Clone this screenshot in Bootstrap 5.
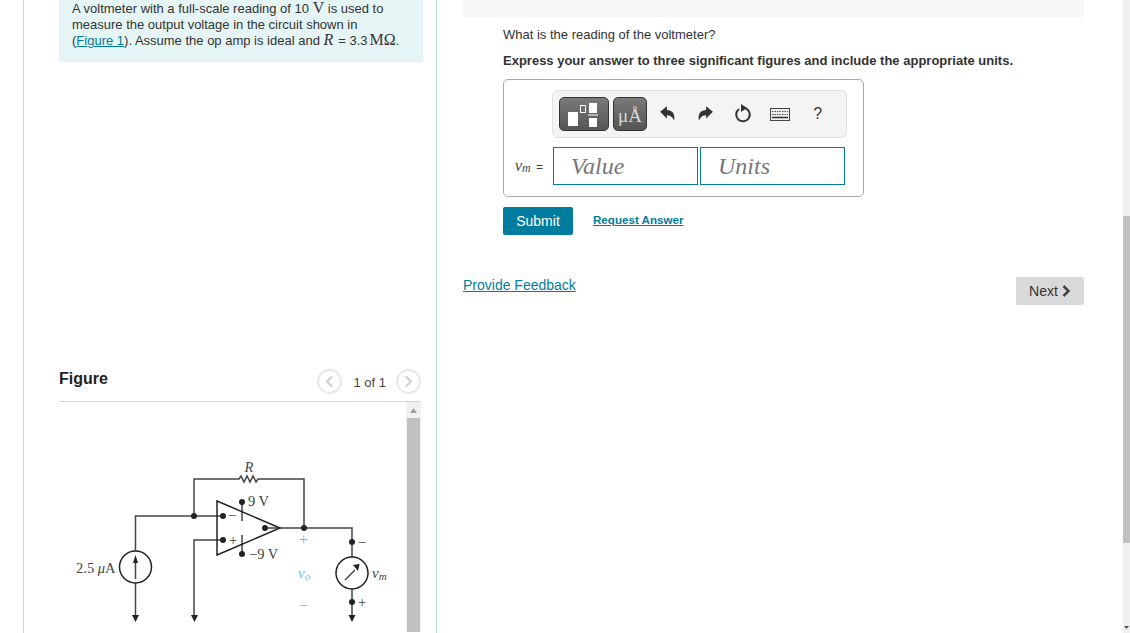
<!DOCTYPE html>
<html lang="en">
  <head>
    <meta charset="UTF-8">
    <meta name="viewport" content="width=device-width, initial-scale=1.0">
    <title>Voltmeter problem</title>
    <link href="https://cdn.jsdelivr.net/npm/bootstrap@5.3.0/dist/css/bootstrap.min.css" rel="stylesheet">
    <style>
      html, body { height: 633px; overflow: hidden; }
      body {
        background: #fff;
        color: #333;
        font-family: "Liberation Sans", Arial, sans-serif;
        font-size: 13px;
        line-height: 16px;
      }
      a { color: #007c9e; }
      .math { font-family: "Liberation Serif", "Times New Roman", serif; font-size: 16px; line-height: 0; }
      .math-i { font-style: italic; margin-right: 5px; }
      .math-u { margin-left: 2px; }
      .page-wrap { height: 633px; }
      .left-pane {
        width: 414px;
        margin-left: 23px;
        padding: 0 13px 0 35px;
        border-left: 1px solid #d4d4d4;
        border-right: 1px solid #b9d3e6;
        height: 633px;
      }
      .intro-box {
        width: 364px;
        height: 62px;
        margin-bottom: 0;
        padding: 1px 22px 0 13px;
        background: #e5f5f6;
      }
      .fig-head {
        height: 340px;
        padding-bottom: 7px;
        width: 362px;
        border-bottom: 1px solid #d5d5d5;
      }
      .fig-title { font-size: 16px; font-weight: 700; color: #222; line-height: 18px; margin-bottom: 6px; }
      .fig-count { font-size: 13px; color: #444; margin: 2px 10px 0 11px; }
      .pager-btn {
        width: 25px;
        height: 25px;
        padding: 0;
        border: 2px solid #e8e8e8;
        border-radius: 50%;
        background: #fff;
      }
      .fig-scroll { width: 362px; height: 230px; }
      .circuit { width: 347px; height: 230px; flex: none; }
      .inner-bar { width: 15px; background: #f1f1f1; }
      .inner-arrow { height: 16px; }
      .inner-thumb { flex: 1; margin: 0 1px; background: #c1c1c1; }
      .right-pane { width: 621px; margin-left: 26px; height: 633px; }
      .top-strip { height: 17px; background: #f7f7f7; }
      .question { padding-left: 40px; }
      .q-text { margin: 10px 0 10px; }
      .q-strong { font-weight: 700; margin-bottom: 10px; }
      .answer-box {
        width: 361px;
        height: 118px;
        padding: 10px 18px 0 11px;
        border: 1px solid #aaa;
        border-radius: 5px;
      }
      .tool-bar {
        width: 295px;
        height: 48px;
        margin-left: 37px;
        padding: 6px;
        background: #f4f4f4;
        border: 1px solid #e0e0e0;
        border-radius: 6px;
      }
      .tool-btn {
        height: 34px;
        padding: 0;
        margin-right: 2px;
        border: 1px solid #333;
        border-radius: 5px;
        background: linear-gradient(#7a7a7a, #555);
      }
      .tool-btn-a { width: 50px; margin-right: 4px; }
      .tool-btn-b { width: 34px; padding-top: 3px; color: #d8d8d8; font-family: "Liberation Serif", serif; font-size: 19px; line-height: 1; }
      .tool-icon { width: 37.5px; text-align: center; color: #333; }
      .tool-help { font-size: 16px; }
      .input-row { margin-top: 9px; }
      .var-label { width: 38px; font-size: 12px; padding-left: 0; color: #444; white-space: nowrap; }
      .var-label i { font-family: "Liberation Serif", serif; font-size: 16px; margin-right: 2px; }
      .var-label sub { font-size: 12px; bottom: -.15em; }
      .ans-field {
        width: 145px;
        height: 38px;
        margin-right: 2px;
        padding: 0 17px;
        border: 1px solid #007c9e;
        border-radius: 0;
        font-family: "Liberation Serif", serif;
        font-style: italic;
        font-size: 24px;
        color: #777;
      }
      .ans-field::placeholder { color: #777; opacity: 1; }
      .actions { margin-top: 10px; height: 28px; }
      .submit-btn {
        width: 70px;
        height: 28px;
        padding: 0;
        border: 0;
        border-radius: 2px;
        background: #007c9e;
        color: #fff;
        font-size: 14px;
      }
      .req-link { margin-left: 20px; margin-top: -3px; font-weight: 700; font-size: 11.6px; }
      .foot-row { margin-top: 42px; font-size: 14px; }
      .next-btn {
        width: 68px;
        height: 28px;
        padding: 0;
        border: 0;
        border-radius: 2px;
        background: #d9d9d9;
        color: #333;
        font-size: 14px;
      }
      .page-bar { width: 7px; margin-left: auto; background: #f1f1f1; height: 633px; }
      .page-thumb { height: 327px; margin-top: 216px; background: #c1c1c1; }
      .page-arrow { margin-top: auto; margin-bottom: 3px; }
    </style>
  </head>
  <body>
    <div class="page-wrap d-flex">
      <div class="left-pane flex-shrink-0">
        <div class="intro-box">
          A voltmeter with a full-scale reading of 10 <span class="math">V</span> is used to measure the output voltage in the circuit shown in
          (<a href="#">Figure 1</a>). Assume the op amp is ideal and <span class="math math-i">R</span>= 3.3<span class="math math-u">MΩ</span>.
        </div>
        <div class="fig-head d-flex justify-content-between align-items-end">
          <div class="fig-title">Figure</div>
          <div class="d-flex align-items-center">
            <button class="pager-btn d-flex align-items-center justify-content-center" aria-label="Previous">
              <svg width="9" height="13" viewBox="0 0 9 13"><path d="M7 1.500 2 6.500l5 5" fill="none" stroke="#ccc" stroke-width="2"/></svg>
            </button>
            <span class="fig-count">1 of 1</span>
            <button class="pager-btn d-flex align-items-center justify-content-center" aria-label="Next">
              <svg width="9" height="13" viewBox="0 0 9 13"><path d="M2 1.500 7 6.500l-5 5" fill="none" stroke="#ccc" stroke-width="2"/></svg>
            </button>
          </div>
        </div>
        <div class="fig-scroll d-flex">
          <svg class="circuit" viewBox="59 403 347 230" font-family="Liberation Serif, serif" font-size="14.500" fill="#444">
            <g fill="none" stroke="#444" stroke-width="1.500">
              <path d="M194 517V480H239l2-3 3 6 3-6 3 6 3-6 3 6 2-3H304V529"/>
              <path d="M135.500 552V517H223"/>
              <path d="M135.500 584V618"/>
              <path d="M194 618V541H223"/>
              <path d="M265 529H352V558"/>
              <path d="M352 590V618"/>
              <path d="M242 503V522M242 536V555"/>
              <circle cx="135.500" cy="568" r="16" stroke="#222"/>
              <circle cx="352" cy="574" r="16" stroke="#222"/>
              <path d="M217 502V556L280 529Z" stroke="#222"/>
              <path d="M135.500 580V562"/>
              <path d="M345 581 355 571"/>
            </g>
            <g fill="#222">
              <circle cx="194" cy="517" r="3"/>
              <circle cx="223" cy="517" r="3"/>
              <circle cx="223" cy="541" r="3"/>
              <circle cx="265" cy="529" r="3"/>
              <circle cx="304" cy="529" r="3"/>
              <circle cx="242" cy="503" r="3"/>
              <circle cx="242" cy="555" r="3"/>
              <circle cx="352" cy="543" r="3"/>
              <circle cx="352" cy="603" r="3"/>
              <path d="M132 616h7l-3.500 7Z"/>
              <path d="M191 616h7l-3.500 7Z"/>
              <path d="M348.500 616h7L352 623Z"/>
              <path d="M133 564h5l-2.500-8Z"/>
              <path d="M353 566l6.500-1-1.500 7Z"/>
            </g>
            <text x="244.500" y="473" font-style="italic">R</text>
            <text x="248" y="507">9 V</text>
            <text x="249" y="560">−9 V</text>
            <text x="228" y="521">−</text>
            <text x="229" y="546">+</text>
            <text x="76" y="574">2.5 <tspan font-style="italic">μ</tspan>A</text>
            <text x="358" y="548">−</text>
            <text x="358" y="608">+</text>
            <text x="372" y="579" font-style="italic" font-size="15">v<tspan font-size="11" dy="2">m</tspan></text>
            <g fill="#5cc3f2">
              <text x="299" y="546" font-size="16">+</text>
              <text x="298" y="579" font-style="italic" font-size="15">v<tspan font-size="11" dy="2">o</tspan></text>
              <text x="299" y="612" font-size="16">−</text>
            </g>
          </svg>
          <div class="inner-bar d-flex flex-column">
            <div class="inner-arrow d-flex justify-content-center align-items-center">
              <svg width="7" height="5" viewBox="0 0 7 5"><path d="M0 5 3.500 0 7 5Z" fill="#a0a0a0"/></svg>
            </div>
            <div class="inner-thumb"></div>
          </div>
        </div>
      </div>

      <div class="right-pane flex-shrink-0">
        <div class="top-strip"></div>
        <div class="question">
          <p class="q-text">What is the reading of the voltmeter?</p>
          <p class="q-strong">Express your answer to three significant figures and include the appropriate units.</p>
          <div class="answer-box">
            <div class="tool-bar d-flex align-items-center">
              <button class="tool-btn tool-btn-a d-flex align-items-center justify-content-center" aria-label="Templates">
                <svg width="34" height="28" viewBox="0 0 34 28" fill="#fff">
                  <rect x="1" y="12" width="10" height="14"/>
                  <rect x="13.500" y="5.500" width="5" height="7" fill="none" stroke="#fff"/>
                  <rect x="22" y="3" width="8" height="10"/>
                  <rect x="21" y="14.500" width="10" height="1"/>
                  <rect x="22" y="18" width="8" height="9"/>
                </svg>
              </button>
              <button class="tool-btn tool-btn-b">μÅ</button>
              <span class="tool-icon">
                <svg width="18" height="18" viewBox="0 0 16 16"><path d="M1 6 7 1v3.500c4.500 0 7.500 3 6.500 9.500C12 10.500 10 9 7 9v3Z" fill="#333"/></svg>
              </span>
              <span class="tool-icon">
                <svg width="18" height="18" viewBox="0 0 16 16"><path d="M15 6 9 1v3.500C4.500 4.500 1.500 7.500 2.500 14 4 10.500 6 9 9 9v3Z" fill="#333"/></svg>
              </span>
              <span class="tool-icon">
                <svg width="18" height="20" viewBox="0 0 18 20">
                  <path d="M11.500 4.200A6.800 6.800 0 1 1 5 5" fill="none" stroke="#333" stroke-width="2"/>
                  <path d="M7 0v8l6-4Z" fill="#333"/>
                </svg>
              </span>
              <span class="tool-icon">
                <svg width="20" height="13" viewBox="0 0 20 13">
                  <rect x=".5" y=".5" width="19" height="12" fill="#eee" stroke="#444"/>
                  <path d="M2 3.500h16M2 6.500h16" stroke="#555" stroke-dasharray="1.500 1"/>
                  <path d="M2 9.500h16" stroke="#333" stroke-width="1.500"/>
                </svg>
              </span>
              <span class="tool-icon tool-help">?</span>
            </div>
            <div class="input-row d-flex align-items-center">
              <label class="var-label flex-shrink-0"><i>v<sub>m</sub></i> =</label>
              <input class="ans-field form-control flex-shrink-0" placeholder="Value" aria-label="Value">
              <input class="ans-field form-control flex-shrink-0" placeholder="Units" aria-label="Units">
            </div>
          </div>
          <div class="actions d-flex align-items-center">
            <button class="submit-btn">Submit</button>
            <a class="req-link" href="#">Request Answer</a>
          </div>
        </div>
        <div class="foot-row d-flex justify-content-between align-items-start">
          <a href="#">Provide Feedback</a>
          <button class="next-btn d-flex align-items-center justify-content-center gap-1">Next
            <svg width="9" height="12" viewBox="0 0 9 12"><path d="M1.500 1 6.500 6l-5 5" fill="none" stroke="#444" stroke-width="2.500"/></svg>
          </button>
        </div>
      </div>

      <div class="page-bar d-flex flex-column">
        <div class="page-thumb"></div>
        <svg class="page-arrow" width="7" height="4" viewBox="0 0 7 4"><path d="M1 0h5L3.500 3Z" fill="#505050"/></svg>
      </div>
    </div>
    <script src="https://cdn.jsdelivr.net/npm/bootstrap@5.3.0/dist/js/bootstrap.bundle.min.js"></script>
  </body>
</html>
